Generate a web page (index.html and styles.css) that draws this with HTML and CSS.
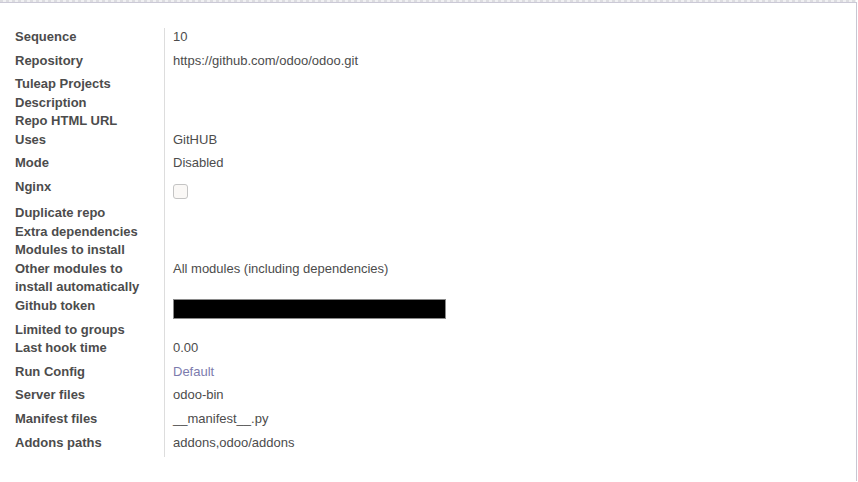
FILE: index.html
```html
<!DOCTYPE html>
<html>
<head>
<meta charset="utf-8">
<title>Repository</title>
<link rel="stylesheet" href="styles.css">
</head>
<body>
<div class="strip"></div>
<div class="sheet">
  <div class="group">
    <div class="label">Sequence</div><div class="cell"><div class="val">10</div></div>
    <div class="label">Repository</div><div class="cell"><div class="val">https://github.com/odoo/odoo.git</div></div>
    <div class="label">Tuleap Projects</div><div class="cell"></div>
    <div class="label">Description</div><div class="cell"></div>
    <div class="label">Repo HTML URL</div><div class="cell"></div>
    <div class="label">Uses</div><div class="cell"><div class="val">GitHUB</div></div>
    <div class="label">Mode</div><div class="cell"><div class="val">Disabled</div></div>
    <div class="label">Nginx</div><div class="cell"><div class="checkbox"></div></div>
    <div class="label">Duplicate repo</div><div class="cell"></div>
    <div class="label">Extra dependencies</div><div class="cell"></div>
    <div class="label">Modules to install</div><div class="cell"></div>
    <div class="label">Other modules to install automatically</div><div class="cell"><div class="val">All modules (including dependencies)</div></div>
    <div class="label">Github token</div><div class="cell"><div class="token"></div></div>
    <div class="label">Limited to groups</div><div class="cell"></div>
    <div class="label">Last hook time</div><div class="cell"><div class="val">0.00</div></div>
    <div class="label">Run Config</div><div class="cell"><div class="val"><a class="link" href="#">Default</a></div></div>
    <div class="label">Server files</div><div class="cell"><div class="val">odoo-bin</div></div>
    <div class="label">Manifest files</div><div class="cell"><div class="val">__manifest__.py</div></div>
    <div class="label">Addons paths</div><div class="cell"><div class="val">addons,odoo/addons</div></div>
  </div>
</div>
</body>
</html>
```

FILE: styles.css
```css
html, body {
  margin: 0;
  padding: 0;
  background: #ffffff;
}
body {
  font-family: "Liberation Sans", Arial, sans-serif;
  font-size: 13px;
  line-height: 1.42857;
  color: #4c4c4c;
  height: 482px;
  overflow: hidden;
}
.strip {
  height: 2px;
  margin-right: 2px;
  background: repeating-linear-gradient(90deg, #dcdce0 0 3px, #f0f0f2 3px 6px);
}
.sheet {
  border-top: 1px solid #cbc9d6;
  border-right: 1px solid #c8c6d2;
  margin-right: 1px;
  height: 479px;
  box-sizing: border-box;
  padding: 25px 0 0 15px;
}
.group {
  display: grid;
  grid-template-columns: 150px 1fr;
}
.label {
  font-weight: bold;
  padding-right: 8px;
  border-right: 1px solid #dddddd;
}
.cell {
  padding-left: 8px;
}
.val {
  margin-bottom: 5px;
}
.link {
  color: #7c7bad;
  text-decoration: none;
}
.checkbox {
  width: 15px;
  height: 15px;
  box-sizing: border-box;
  margin: 6px 0 5px 0;
  border: 1px solid #c4c4c4;
  border-radius: 3px;
  background: #faf8f6;
}
.token {
  width: 273px;
  height: 20px;
  box-sizing: border-box;
  margin: 2px 0 2px 0;
  background: #000000;
  border: 1px solid #8a8a8a;
}
```
